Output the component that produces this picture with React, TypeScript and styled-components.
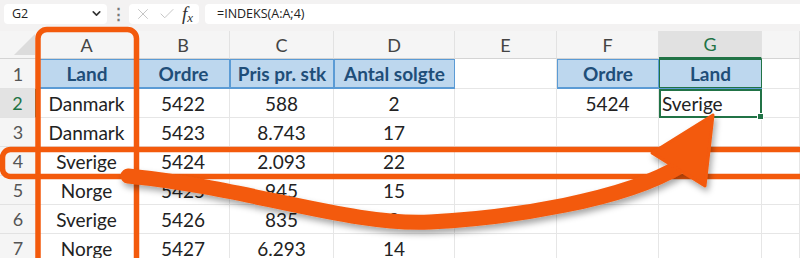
import styled, { createGlobalStyle } from 'styled-components';
import { ChevronDown, X, Check } from 'lucide-react';

const GlobalStyle = createGlobalStyle`
  html, body {
    margin: 0;
    padding: 0;
    background: #ffffff;
  }
  body {
    font-family: Lato, "Open Sans", sans-serif;
  }
`;

const ORANGE = '#f35a0c';
const GREEN = '#217346';

const columns = ['A', 'B', 'C', 'D', 'E', 'F', 'G', ''];

const headerRow = ['Land', 'Ordre', 'Pris pr. stk', 'Antal solgte', '', 'Ordre', 'Land', ''];

const dataRows: string[][] = [
  ['Danmark', '5422', '588', '2', '', '5424', 'Sverige', ''],
  ['Danmark', '5423', '8.743', '17', '', '', '', ''],
  ['Sverige', '5424', '2.093', '22', '', '', '', ''],
  ['Norge', '5425', '945', '15', '', '', '', ''],
  ['Sverige', '5426', '835', '9', '', '', '', ''],
  ['Norge', '5427', '6.293', '14', '', '', '', ''],
];

function App() {
  return (
    <Page>
      <GlobalStyle />
      <Toolbar>
        <NameBox>
          <span>G2</span>
          <ChevronDown size={13} strokeWidth={3} color="#333" />
        </NameBox>
        <Dots>⋮</Dots>
        <FormulaTools>
          <X size={18} strokeWidth={1.3} color="#c4c4c4" />
          <Check size={18} strokeWidth={1.3} color="#c4c4c4" />
          <Fx>
            f<sub>x</sub>
          </Fx>
        </FormulaTools>
        <FormulaInput>=INDEKS(A:A;4)</FormulaInput>
      </Toolbar>

      <Sheet>
        <Corner>
          <CornerTriangle />
        </Corner>
        {columns.map((c, i) => (
          <ColHead key={`h${i}`} $active={c === 'G'}>
            {c}
          </ColHead>
        ))}

        <RowHead $height={30}>1</RowHead>
        {headerRow.map((t, i) =>
          t ? (
            <TableHead key={`t${i}`} $green={i === 6}>
              {t}
            </TableHead>
          ) : (
            <Cell key={`t${i}`} />
          )
        )}

        {dataRows.map((row, r) => (
          <Row key={`r${r}`} index={r + 2} row={row} />
        ))}
      </Sheet>

      <Overlay viewBox="0 0 800 258" width={800} height={258}>
        <defs>
          <filter id="shadow" x="-10%" y="-30%" width="120%" height="160%">
            <feDropShadow dx="2" dy="4" stdDeviation="3" floodColor="#000" floodOpacity="0.35" />
          </filter>
        </defs>
        <rect x={38} y={29.5} width={98.5} height={250} rx={9} fill="none" stroke={ORANGE} strokeWidth={5.5} />
        <rect x={2.5} y={149.5} width={900} height={27} rx={8} fill="none" stroke={ORANGE} strokeWidth={5.5} />
        <g filter="url(#shadow)">
          <path
            d="M128 176 C 250 188, 350 226, 430 222 S 625 200, 680 166"
            fill="none"
            stroke={ORANGE}
            strokeWidth={15}
            strokeLinecap="round"
          />
          <polygon points="713,115 652,153 705,186" fill={ORANGE} stroke={ORANGE} strokeWidth={3} strokeLinejoin="round" />
        </g>
      </Overlay>
    </Page>
  );
}

function Row({ index, row }: { index: number; row: string[] }) {
  const selectedRow = index === 2;
  return (
    <>
      <RowHead $height={29} $active={selectedRow}>
        {index}
      </RowHead>
      {row.map((t, i) => {
        if (selectedRow && i === 6) {
          return (
            <SelectedCell key={i}>
              {t}
              <Handle />
            </SelectedCell>
          );
        }
        return <Cell key={i}>{t}</Cell>;
      })}
    </>
  );
}

export default App;

const Page = styled.div`
  position: relative;
  width: 800px;
  height: 258px;
  overflow: hidden;
  background: #ffffff;
`;

const Toolbar = styled.div`
  display: flex;
  align-items: center;
  height: 31px;
  padding: 0 0 4px 4px;
  box-sizing: border-box;
  background: #f3f2f2;
`;

const NameBox = styled.div`
  display: flex;
  align-items: center;
  justify-content: space-between;
  width: 103px;
  height: 20px;
  box-sizing: border-box;
  padding: 0 4px 0 8px;
  background: #ffffff;
  border-radius: 4px;
  font-family: "Open Sans", Lato, sans-serif;
  font-size: 12.5px;
  color: #222;
`;

const Dots = styled.div`
  width: 22px;
  text-align: center;
  font-size: 15px;
  font-weight: bold;
  color: #777;
`;

const FormulaTools = styled.div`
  display: flex;
  align-items: center;
  gap: 6px;
  width: 70px;
  height: 20px;
  box-sizing: border-box;
  padding: 0 5px;
  background: #ffffff;
  border-radius: 4px;
  margin-right: 6px;
`;

const Fx = styled.span`
  font-family: "Liberation Serif", serif;
  font-style: italic;
  font-size: 19px;
  color: #333;
  line-height: 1;

  sub {
    font-size: 13px;
    vertical-align: -2px;
  }
`;

const FormulaInput = styled.div`
  flex: 1;
  display: flex;
  align-items: center;
  height: 20px;
  padding-left: 12px;
  background: #ffffff;
  border-radius: 4px 0 0 4px;
  font-family: "Open Sans", Lato, sans-serif;
  font-size: 12.5px;
  color: #222;
`;

const Sheet = styled.div`
  display: grid;
  grid-template-columns: 37px 100px 93px 104px 121px 102px 102px 103px 1fr;
  grid-auto-rows: auto;
  font-size: 19px;
  color: #222;
`;

const Corner = styled.div`
  display: flex;
  align-items: flex-end;
  justify-content: flex-end;
  height: 28px;
  padding: 0 2px 3px 0;
  box-sizing: border-box;
  background: #f5f5f5;
  border-bottom: 1px solid #d4d4d4;
`;

const CornerTriangle = styled.div`
  width: 0;
  height: 0;
  border-left: 21px solid transparent;
  border-bottom: 21px solid #dcdcdc;
`;

const ColHead = styled.div<{ $active?: boolean }>`
  display: flex;
  align-items: center;
  justify-content: center;
  height: 28px;
  box-sizing: border-box;
  background: ${(p) => (p.$active ? '#e1e1e1' : '#f5f5f5')};
  color: ${(p) => (p.$active ? GREEN : '#444')};
  border-right: 1px solid #e2e2e2;
  border-bottom: ${(p) => (p.$active ? `2px solid ${GREEN}` : '1px solid #d4d4d4')};
  font-size: 18px;
`;

const RowHead = styled.div<{ $height: number; $active?: boolean }>`
  display: flex;
  align-items: center;
  justify-content: center;
  height: ${(p) => p.$height}px;
  box-sizing: border-box;
  background: ${(p) => (p.$active ? '#e3e3e3' : '#f5f5f5')};
  color: ${(p) => (p.$active ? GREEN : '#555')};
  border-bottom: 1px solid #e2e2e2;
  border-right: ${(p) => (p.$active ? `2px solid ${GREEN}` : '1px solid #d4d4d4')};
  font-size: 18px;
`;

const Cell = styled.div`
  display: flex;
  align-items: center;
  justify-content: center;
  box-sizing: border-box;
  border-right: 1px solid #e6e6e6;
  border-bottom: 1px solid #e6e6e6;
  white-space: nowrap;
  overflow: hidden;
`;

const TableHead = styled.div<{ $green?: boolean }>`
  display: flex;
  align-items: center;
  justify-content: center;
  height: 30px;
  box-sizing: border-box;
  background: #bdd7ee;
  color: #1f4e79;
  font-weight: bold;
  white-space: nowrap;
  box-shadow: inset 0 0 0 1px ${(p) => (p.$green ? GREEN : '#5b9bd5')};
  border-bottom: 1px solid #5b9bd5;
`;

const SelectedCell = styled.div`
  position: relative;
  display: flex;
  align-items: center;
  justify-content: flex-start;
  padding-left: 3px;
  box-sizing: border-box;
  box-shadow: inset 0 0 0 2px ${GREEN};
  white-space: nowrap;
`;

const Handle = styled.span`
  position: absolute;
  right: -2px;
  bottom: -2px;
  width: 5px;
  height: 5px;
  background: ${GREEN};
  border: 1px solid #ffffff;
`;

const Overlay = styled.svg`
  position: absolute;
  top: 0;
  left: 0;
  pointer-events: none;
`;
